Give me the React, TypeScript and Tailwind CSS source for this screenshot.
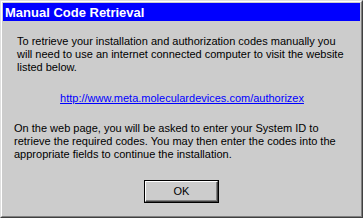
import React from "react";

const font = { fontFamily: '"Liberation Sans", Arial, sans-serif' };

function OkButton() {
  return (
    <div className="border border-black">
      <button
        className="w-[73px] h-[21px] bg-[#cccccc] border border-t-white border-l-white border-r-[#404040] border-b-[#404040] text-[11px] text-black leading-none shadow-[inset_-1px_-1px_0_#808080]"
        style={font}
      >
        OK
      </button>
    </div>
  );
}

export default function App() {
  return (
    <div
      className="w-[363px] h-[218px] bg-[#cccccc] border border-t-[#dfdfdf] border-l-[#dfdfdf] border-r-[#404040] border-b-[#404040]"
      style={font}
    >
      <div className="h-full border border-t-white border-l-white border-r-[#808080] border-b-[#808080] p-px flex flex-col">
        {/* title bar */}
        <div className="h-[18px] bg-[#0000ff] flex items-center pl-[2px]">
          <span className="text-white font-bold text-[13px] leading-none">
            Manual Code Retrieval
          </span>
        </div>

        <div className="flex flex-col text-[11px] leading-[13px] text-black">
          <p className="pl-[14px] pt-[14px]">
            To retrieve your installation and authorization codes manually you
            <br />
            will need to use an internet connected computer to visit the website
            <br />
            listed below.
          </p>
          <div className="flex justify-center pt-[18px] pl-[1px]">
            <a className="text-[#0000ff] underline">
              http://www.meta.moleculardevices.com/authorizex
            </a>
          </div>
          <p className="pl-[11px] pt-[17px]">
            On the web page, you will be asked to enter your System ID to
            <br />
            retrieve the required codes. You may then enter the codes into the
            <br />
            appropriate fields to continue the installation.
          </p>
          <div className="flex justify-center pt-[19px]">
            <OkButton />
          </div>
        </div>
      </div>
    </div>
  );
}
